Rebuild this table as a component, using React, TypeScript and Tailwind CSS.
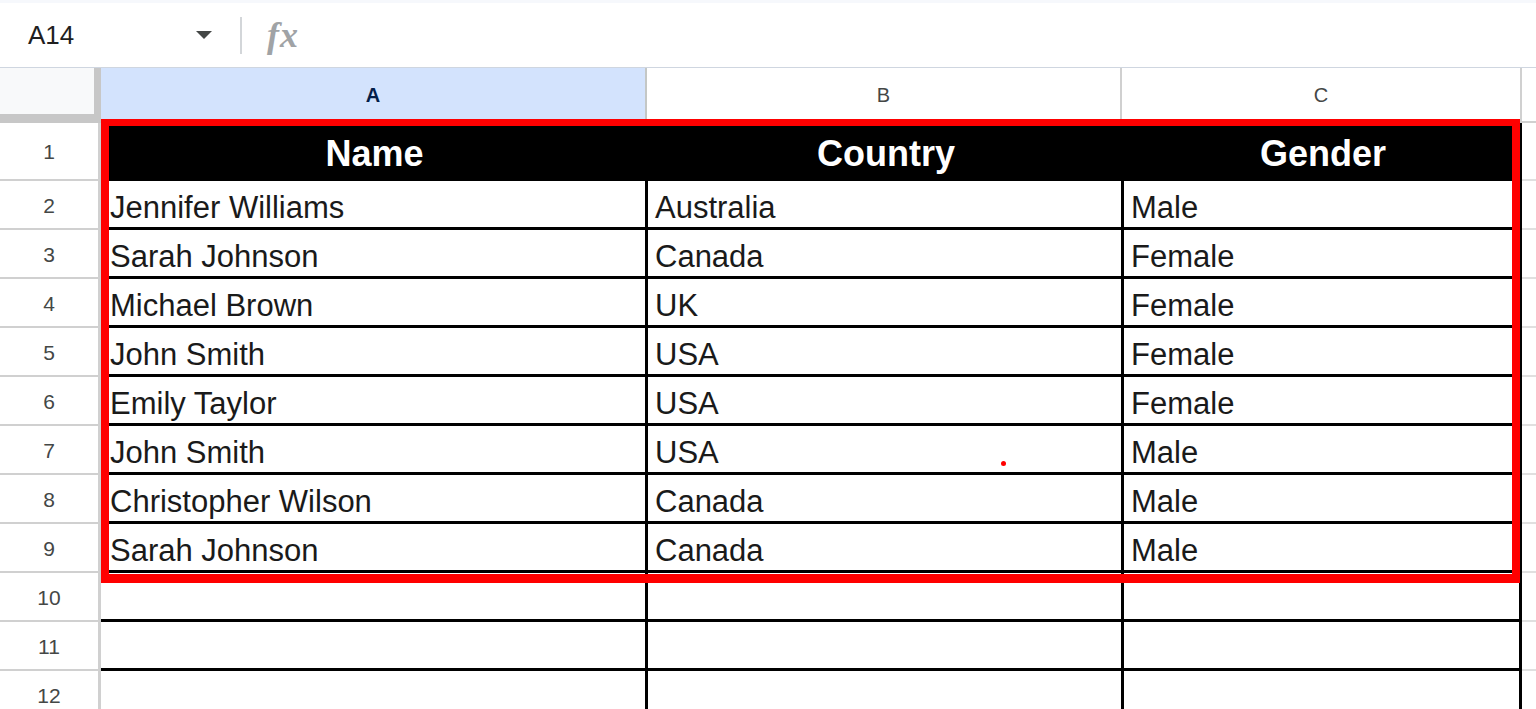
const rows: string[][] = [
  ['Jennifer Williams', 'Australia', 'Male'],
  ['Sarah Johnson', 'Canada', 'Female'],
  ['Michael Brown', 'UK', 'Female'],
  ['John Smith', 'USA', 'Female'],
  ['Emily Taylor', 'USA', 'Female'],
  ['John Smith', 'USA', 'Male'],
  ['Christopher Wilson', 'Canada', 'Male'],
  ['Sarah Johnson', 'Canada', 'Male'],
  ['', '', ''],
  ['', '', ''],
  ['', '', ''],
];

function FormulaBar() {
  return (
    <div className="flex h-[65px] items-center border-b border-[#cfd6e0] bg-white">
      <div className="flex w-[240px] items-center pl-[28px]">
        <span className="text-[26px] leading-none text-[#1f1f1f]">A14</span>
        <svg className="ml-auto mr-[28px]" width="16" height="8" viewBox="0 0 16 8">
          <path d="M0 0 L16 0 L8 8 Z" fill="#444746" />
        </svg>
      </div>
      <div className="h-[37px] w-[2px] bg-[#d3d6d9]" />
      <span className="ml-[25px] text-[36px] font-bold italic leading-none tracking-[1px] text-[#a0a3a6] [font-family:'Liberation_Serif',serif]">
        fx
      </span>
    </div>
  );
}

function ColumnHeaders() {
  return (
    <div className="flex h-[55px]">
      <div className="w-[101px] shrink-0 border-b-[9px] border-r-[7px] border-[#c7c7c7] bg-[#f8f9fa]" />
      <div className="flex w-[546px] shrink-0 items-center justify-center border-b-2 border-r-2 border-[#c4c7c5] bg-[#d3e3fd] text-[20px] font-bold text-[#041e49]">
        A
      </div>
      <div className="flex w-[475px] shrink-0 items-center justify-center border-b-2 border-r-2 border-[#d0d0d0] text-[20px] text-[#444746]">
        B
      </div>
      <div className="flex w-[400px] shrink-0 items-center justify-center border-b-2 border-r-2 border-[#d0d0d0] text-[20px] text-[#444746]">
        C
      </div>
      <div className="flex-1 border-b-2 border-[#d0d0d0]" />
    </div>
  );
}

function TitleRow() {
  return (
    <div className="flex h-[58px]">
      <div className="flex w-[101px] shrink-0 items-center justify-center border-b-2 border-r-[3px] border-[#d0d0d0] pt-[2px] text-[21px] text-[#444746]">
        1
      </div>
      {[
        ['Name', 'w-[547px]'],
        ['Country', 'w-[476px]'],
        ['Gender', 'w-[398px]'],
      ].map(([label, w]) => (
        <div
          key={label}
          className={`flex ${w} shrink-0 items-center justify-center bg-black pt-[4px] text-[36px] font-bold text-white`}
        >
          {label}
        </div>
      ))}
      <div className="flex-1 border-b-2 border-[#e0e0e0]" />
    </div>
  );
}

function DataRow({ n, cells }: { n: number; cells: string[] }) {
  const widths = ['w-[547px] pl-[9px]', 'w-[476px] pl-[7px]', 'w-[398px] pl-[7px]'];
  return (
    <div className="flex h-[49px]">
      <div className="flex w-[101px] shrink-0 items-center justify-center border-b-2 border-r-[3px] border-[#d0d0d0] pt-[2px] text-[21px] text-[#444746]">
        {n}
      </div>
      {cells.map((c, i) => (
        <div
          key={i}
          className={`${widths[i]} shrink-0 border-b-[3px] border-r-[3px] border-black pt-[10px] text-[31px] leading-[34px] text-[#1a1a1a]`}
        >
          {c}
        </div>
      ))}
      <div className="flex-1 border-b-2 border-[#e0e0e0]" />
    </div>
  );
}

export default function App() {
  return (
    <div className="relative h-[709px] w-[1536px] overflow-hidden bg-white [font-family:'Liberation_Sans',Arial,sans-serif]">
      <div className="h-[3px] bg-[#f6f8fc]" />
      <FormulaBar />
      <ColumnHeaders />
      <TitleRow />
      {rows.map((r, i) => (
        <DataRow key={i} n={i + 2} cells={r} />
      ))}

      {/* selection outline */}
      <div className="pointer-events-none absolute left-[101px] top-[119px] h-[464px] w-[1419px] border-x-[8px] border-b-[9px] border-t-[7px] border-[#ff0000]" />
      <div className="absolute left-[1001px] top-[461px] h-[5px] w-[5px] rounded-full bg-[#ff0000]" />
    </div>
  );
}
